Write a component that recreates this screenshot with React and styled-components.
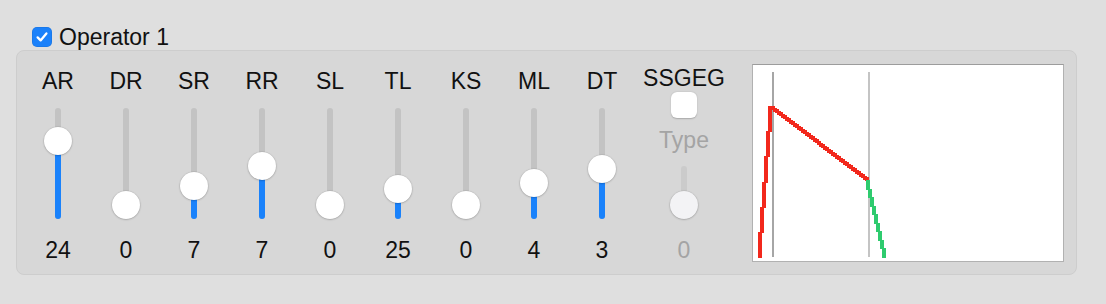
import React from 'react';
import styled, { createGlobalStyle } from 'styled-components';

const GlobalStyle = createGlobalStyle`
    html, body {
        margin: 0;
        padding: 0;
        background: #dfdfdf;
        font-family: "Liberation Sans", Arial, sans-serif;
        color: #111;
    }
`;

const Page = styled.div`
    width: 1106px;
    height: 304px;
    padding: 24px 0 0 16px;
    box-sizing: border-box;
`;

const Header = styled.label`
    display: flex;
    align-items: center;
    height: 26px;
    padding-left: 16px;
    font-size: 23px;
    line-height: 26px;
`;

const CheckBox = styled.span`
    width: 20px;
    height: 20px;
    border-radius: 5px;
    margin-right: 7px;
    display: flex;
    align-items: center;
    justify-content: center;
    background: ${({ checked }) => (checked ? '#1b81fa' : '#ffffff')};
    box-shadow: ${({ checked }) =>
        checked
            ? 'inset 0 0 0 0.5px rgba(0, 0, 0, 0.12)'
            : '0 0.5px 1.5px rgba(0, 0, 0, 0.25)'};
`;

const Panel = styled.div`
    width: 1061px;
    height: 225px;
    box-sizing: border-box;
    display: flex;
    align-items: flex-start;
    padding: 13px 12px 11px 7px;
    background: #d7d7d7;
    border: 1px solid #cdcdcd;
    border-radius: 8px;
`;

const Column = styled.div`
    width: ${({ wide }) => (wide ? '96px' : '68px')};
    margin-top: ${({ wide }) => (wide ? '1px' : '4px')};
    display: flex;
    flex-direction: column;
    align-items: center;
`;

const Label = styled.div`
    font-size: 23px;
    line-height: 26px;
    height: 26px;
    color: ${({ disabled }) => (disabled ? '#a4a4a4' : '#111')};
    margin-top: ${({ gap }) => gap || 0}px;
    white-space: nowrap;
`;

const Track = styled.div`
    position: relative;
    width: 6px;
    height: ${({ size }) => size}px;
    margin-top: ${({ gap }) => gap}px;
    border-radius: 3px;
    background: ${({ disabled }) => (disabled ? '#cbcbcb' : '#c3c3c3')};
`;

const Fill = styled.div`
    position: absolute;
    left: 0;
    right: 0;
    bottom: 0;
    border-radius: 3px;
    background: #1a82fb;
`;

const Thumb = styled.div`
    position: absolute;
    left: -11px;
    width: 28px;
    height: 28px;
    border-radius: 50%;
    background: ${({ disabled }) => (disabled ? '#f3f3f5' : '#ffffff')};
    box-shadow: 0 0.5px 2px rgba(0, 0, 0, 0.28), 0 0 0 0.5px rgba(0, 0, 0, 0.05);
`;

const BigCheck = styled.span`
    display: block;
    width: 26px;
    height: 26px;
    margin-top: 1px;
    border-radius: 6px;
    background: #ffffff;
    box-shadow: 0 0.5px 1.5px rgba(0, 0, 0, 0.22);
`;

const Graph = styled.div`
    width: 312px;
    height: 198px;
    box-sizing: border-box;
    margin-left: 20px;
    background: #ffffff;
    border: 1px solid #b1b1b1;
    border-top-color: #9c9c9c;
    svg {
        display: block;
    }
`;

const THUMB = 28;

const Slider = ({ value, max, size = 111, gap = 13, disabled }) => {
    const range = size - THUMB;
    const offset = max ? (value / max) * range : 0;
    return (
        <Track size={size} gap={gap} disabled={disabled}>
            {!disabled && offset > 0 && <Fill style={{ height: offset + THUMB / 2 }} />}
            <Thumb disabled={disabled} style={{ bottom: offset }} />
        </Track>
    );
};

const params = [
    { name: 'AR', value: 24, max: 31 },
    { name: 'DR', value: 0, max: 31 },
    { name: 'SR', value: 7, max: 31 },
    { name: 'RR', value: 7, max: 15 },
    { name: 'SL', value: 0, max: 15 },
    { name: 'TL', value: 25, max: 127 },
    { name: 'KS', value: 0, max: 3 },
    { name: 'ML', value: 4, max: 15 },
    { name: 'DT', value: 3, max: 7 },
];

// pixel staircase between two points, like the low-res envelope plot
const steps = (x0, y0, x1, y1, dx, w, minH) => {
    const rects = [];
    const n = Math.max(1, Math.round((x1 - x0) / dx));
    for (let i = 0; i < n; i++) {
        const xa = x0 + ((x1 - x0) * i) / n;
        const ya = Math.round(y0 + ((y1 - y0) * i) / n);
        const yb = Math.round(y0 + ((y1 - y0) * (i + 1)) / n);
        const top = Math.min(ya, yb);
        rects.push([Math.round(xa), top, w, Math.max(minH, Math.abs(yb - ya) + 1)]);
    }
    return rects;
};

const red = steps(5, 192, 17, 41, 2, 4, 3).concat(steps(18, 41, 114, 114, 2, 4, 4));
const green = steps(113, 115, 131, 192, 2, 4, 4);

const Envelope = () => (
    <svg width="310" height="196" viewBox="0 0 310 196" shapeRendering="crispEdges">
        <rect x="19" y="7" width="2" height="185" fill="#a6a6a6" />
        <rect x="115" y="7" width="2" height="185" fill="#c4c4c4" />
        {red.map(([x, y, w, h], i) => (
            <rect key={`r${i}`} x={x} y={y} width={w} height={h} fill="#f2281c" />
        ))}
        {green.map(([x, y, w, h], i) => (
            <rect key={`g${i}`} x={x} y={y} width={w} height={h} fill="#2ecb6e" />
        ))}
    </svg>
);

const App = () => (
    <Page>
        <GlobalStyle />
        <Header>
            <CheckBox checked>
                <svg width="14" height="14" viewBox="0 0 14 14">
                    <path
                        d="M2.6 7.4 L5.6 10.4 L11.4 3.4"
                        fill="none"
                        stroke="#fff"
                        strokeWidth="2.3"
                        strokeLinecap="round"
                        strokeLinejoin="round"
                    />
                </svg>
            </CheckBox>
            Operator 1
        </Header>
        <Panel>
            {params.map((p) => (
                <Column key={p.name}>
                    <Label>{p.name}</Label>
                    <Slider value={p.value} max={p.max} size={111} gap={14} />
                    <Label gap={18}>{p.value}</Label>
                </Column>
            ))}
            <Column wide>
                <Label>SSGEG</Label>
                <BigCheck />
                <Label disabled gap={9}>Type</Label>
                <Slider value={0} max={7} size={53} gap={13} disabled />
                <Label disabled gap={18}>0</Label>
            </Column>
            <Graph>
                <Envelope />
            </Graph>
        </Panel>
    </Page>
);

export default App;
